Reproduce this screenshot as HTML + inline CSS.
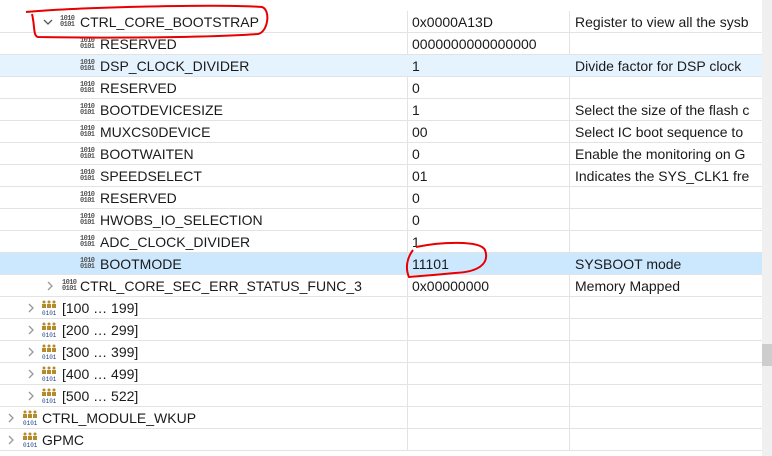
<!DOCTYPE html><html><head><style>
body{margin:0;width:772px;height:456px;overflow:hidden;background:#fff;font-family:"Segoe UI","Liberation Sans",sans-serif;font-size:14px;color:#1a1a1a;position:relative}
.r{position:absolute;left:0;width:762px;height:21px;border-bottom:1px solid #e3e3e3}
.r span{position:absolute;top:3px;white-space:nowrap}
.c1{left:412px}.c2{left:575px}
.vl{position:absolute;top:11px;height:440px;width:1px;background:#e3e3e3}
.ch{position:absolute;top:6px;width:10px;height:10px}
.bi{position:absolute;top:5px !important;font-size:7px;line-height:6px;font-family:"Liberation Mono",monospace;color:#555;letter-spacing:-.6px;font-weight:bold}
.gi{position:absolute;top:3px;width:16px;height:16px}
</style></head><body>
<div class="vl" style="left:407px"></div><div class="vl" style="left:569px"></div>
<div id="rows"></div>
<div style="position:absolute;left:762px;top:0;width:10px;height:456px;background:#f0f0f0"></div>
<div style="position:absolute;left:762px;top:344px;width:10px;height:22px;background:#cdcdcd"></div>
<svg style="position:absolute;left:0;top:0" width="772" height="456"><path d="M26 12 C80 7,220 4,262 7 C271 10,268 32,258 34 C200 38,90 38,38 37 C33 36,35 26,32 14" fill="none" stroke="#e60000" stroke-width="2"/><path d="M416 247 C440 242,480 240,485 250 C490 264,478 272,455 273 C435 275,420 276,409 277 C405 268,407 258,413 250" fill="none" stroke="#e60000" stroke-width="2"/></svg>
<script>
var R=[
[0,43,60,80,"CTRL_CORE_BOOTSTRAP","0x0000A13D","Register to view all the sysb","v","b"],
[0,0,80,100,"RESERVED","0000000000000000","","","b"],
[1,0,80,100,"DSP_CLOCK_DIVIDER","1","Divide factor for DSP clock","","b"],
[0,0,80,100,"RESERVED","0","","","b"],
[0,0,80,100,"BOOTDEVICESIZE","1","Select the size of the flash c","","b"],
[0,0,80,100,"MUXCS0DEVICE","00","Select IC boot sequence to","","b"],
[0,0,80,100,"BOOTWAITEN","0","Enable the monitoring on G","","b"],
[0,0,80,100,"SPEEDSELECT","01","Indicates the SYS_CLK1 fre","","b"],
[0,0,80,100,"RESERVED","0","","","b"],
[0,0,80,100,"HWOBS_IO_SELECTION","0","","","b"],
[0,0,80,100,"ADC_CLOCK_DIVIDER","1","","","b"],
[2,0,80,100,"BOOTMODE","11101","SYSBOOT mode","","b"],
[0,45,62,80,"CTRL_CORE_SEC_ERR_STATUS_FUNC_3","0x00000000","Memory Mapped",">","b"],
[0,26,41,62,"[100 … 199]","","",">","g"],
[0,26,41,62,"[200 … 299]","","",">","g"],
[0,26,41,62,"[300 … 399]","","",">","g"],
[0,26,41,62,"[400 … 499]","","",">","g"],
[0,26,41,62,"[500 … 522]","","",">","g"],
[0,6,22,42,"CTRL_MODULE_WKUP","","",">","g"],
[0,6,22,42,"GPMC","","",">","g"]];
var h="";R.forEach(function(r,i){var bg=r[0]==1?"#e5f3ff":r[0]==2?"#cce8ff":"transparent";
h+='<div class="r" style="top:'+(11+22*i)+'px;background:'+bg+'">';
if(r[7]=="v")h+='<svg class="ch" style="left:'+r[1]+'px" viewBox="0 0 10 10"><path d="M1 3 L5 7 L9 3" fill="none" stroke="#555" stroke-width="1.3"/></svg>';
if(r[7]==">")h+='<svg class="ch" style="left:'+r[1]+'px" viewBox="0 0 10 10"><path d="M3 1 L7 5 L3 9" fill="none" stroke="#999" stroke-width="1.3"/></svg>';
if(r[8]=="b")h+='<span class="bi" style="left:'+r[2]+'px">1010<br>0101</span>';
else h+='<svg class="gi" style="left:'+r[2]+'px" viewBox="0 0 16 16"><g fill="#b58a2a"><circle cx="3" cy="2" r="1.5"/><circle cx="8" cy="2" r="1.5"/><circle cx="13" cy="2" r="1.5"/><rect x="1" y="4" width="4" height="4"/><rect x="6" y="4" width="4" height="4"/><rect x="11" y="4" width="4" height="4"/></g><text x="1" y="15" font-size="6" font-family="Liberation Mono" fill="#1a3a8a">0101</text></svg>';
h+='<span style="left:'+r[3]+'px">'+r[4]+'</span><span class="c1">'+r[5]+'</span><span class="c2">'+r[6]+'</span></div>';});
document.getElementById("rows").innerHTML=h;
</script></body></html>
